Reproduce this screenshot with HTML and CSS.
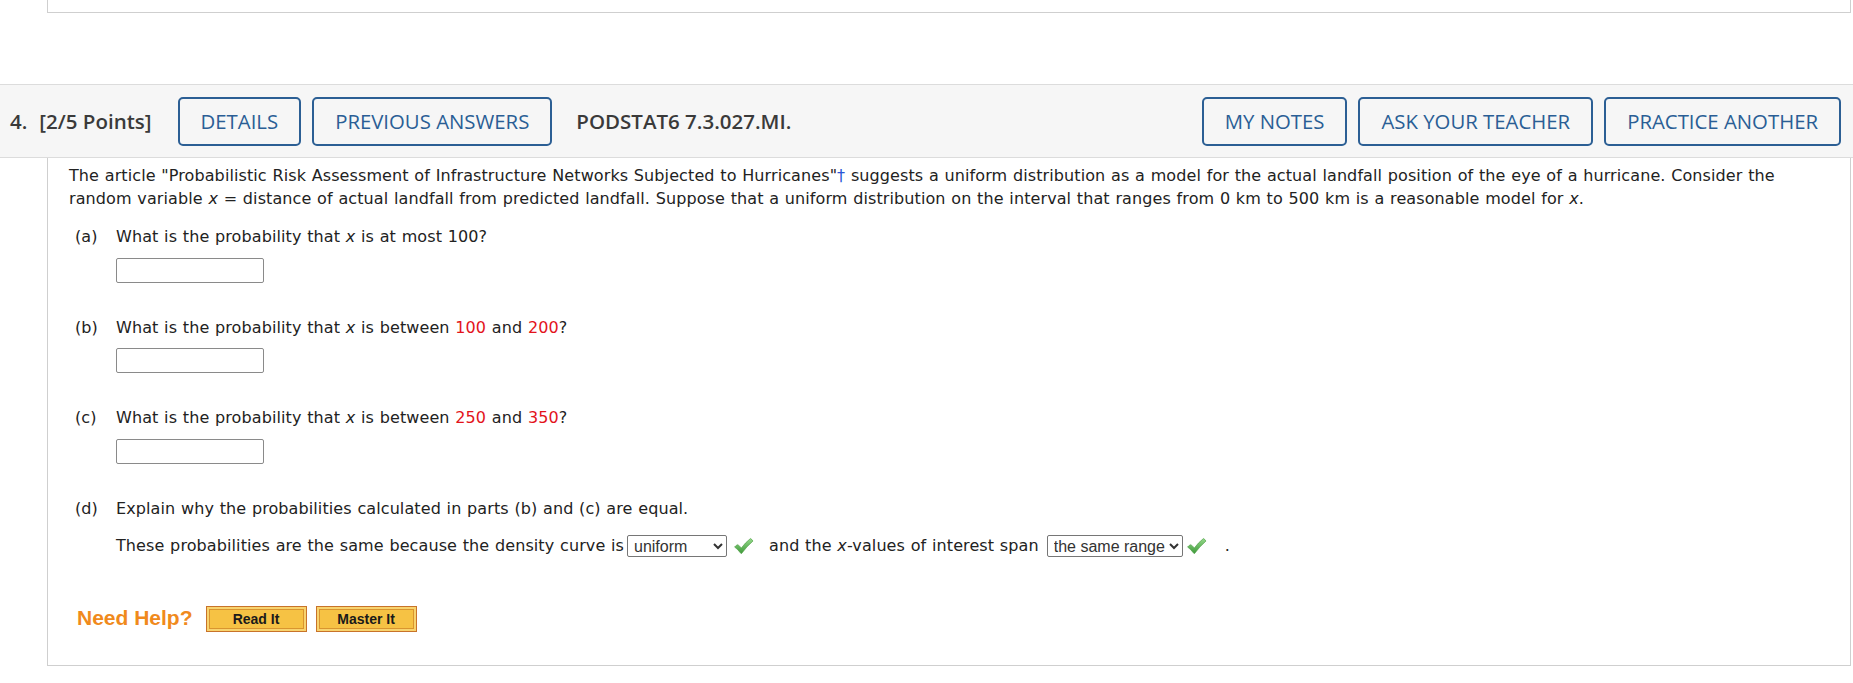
FILE: index.html
```html
<!DOCTYPE html>
<html>
<head>
<meta charset="utf-8">
<link rel="stylesheet" href="styles.css">
</head>
<body>
<div class="prev-card"></div>

<div class="qhead">
  <div class="qnum"><span class="num">4.</span><span class="pts">[2/5 Points]</span></div>
  <button class="hbtn first">DETAILS</button>
  <button class="hbtn">PREVIOUS ANSWERS</button>
  <div class="qcode">PODSTAT6 7.3.027.MI.</div>
  <div class="hright">
    <button class="hbtn">MY NOTES</button>
    <button class="hbtn">ASK YOUR TEACHER</button>
    <button class="hbtn">PRACTICE ANOTHER</button>
  </div>
</div>

<div class="qbody">
  <p class="intro">The article "Probabilistic Risk Assessment of Infrastructure Networks Subjected to Hurricanes"<span class="dagger">†</span> suggests a uniform distribution as a model for the actual landfall position of the eye of a hurricane. Consider the random variable <i>x</i> = distance of actual landfall from predicted landfall. Suppose that a uniform distribution on the interval that ranges from 0 km to 500 km is a reasonable model for <i>x</i>.</p>

  <div class="part">
    <div class="prow"><span class="plabel">(a)</span><span>What is the probability that <i>x</i> is at most 100?</span></div>
    <div class="ans"><input class="box" type="text"></div>
  </div>

  <div class="part">
    <div class="prow"><span class="plabel">(b)</span><span>What is the probability that <i>x</i> is between <span class="red">100</span> and <span class="red">200</span>?</span></div>
    <div class="ans"><input class="box" type="text"></div>
  </div>

  <div class="part">
    <div class="prow"><span class="plabel">(c)</span><span>What is the probability that <i>x</i> is between <span class="red">250</span> and <span class="red">350</span>?</span></div>
    <div class="ans"><input class="box" type="text"></div>
  </div>

  <div class="part">
    <div class="prow"><span class="plabel">(d)</span><span>Explain why the probabilities calculated in parts (b) and (c) are equal.</span></div>
    <div class="ans sentence">
      <span>These probabilities are the same because the density curve is</span>
      <select class="sel sel-a"><option>uniform</option></select>
      <svg class="check" width="21" height="18" viewBox="0 0 20 17"><defs><linearGradient id="g1" x1="0" y1="0" x2="0" y2="1"><stop offset="0" stop-color="#94d98a"/><stop offset="1" stop-color="#3f9a3a"/></linearGradient></defs><path d="M1.5 9.5 Q3 7.6 4.6 7.2 L8 10.3 Q12 5 16.6 1.4 Q18.2 2.2 19 3.8 Q13 9 8.2 15.6 Q7.4 15.8 7 15 Q4.5 11.5 1.5 9.5 Z" fill="url(#g1)" stroke="#4a9a40" stroke-width="0.6" stroke-linejoin="round"/></svg>
      <span class="after">and the <i>x</i>-values of interest span</span>
      <select class="sel sel-b"><option>the same range</option></select>
      <svg class="check check-b" width="21" height="18" viewBox="0 0 20 17"><defs><linearGradient id="g2" x1="0" y1="0" x2="0" y2="1"><stop offset="0" stop-color="#94d98a"/><stop offset="1" stop-color="#3f9a3a"/></linearGradient></defs><path d="M1.5 9.5 Q3 7.6 4.6 7.2 L8 10.3 Q12 5 16.6 1.4 Q18.2 2.2 19 3.8 Q13 9 8.2 15.6 Q7.4 15.8 7 15 Q4.5 11.5 1.5 9.5 Z" fill="url(#g2)" stroke="#4a9a40" stroke-width="0.6" stroke-linejoin="round"/></svg>
      <span class="dot">.</span>
    </div>
  </div>

  <div class="help">
    <span class="need">Need Help?</span>
    <button class="hb">Read It</button>
    <button class="hb">Master It</button>
  </div>
</div>
</body>
</html>
```
FILE: styles.css
```css
html, body {
  margin: 0;
  padding: 0;
  background: #ffffff;
}

body {
  font-family: "DejaVu Sans", Verdana, sans-serif;
  color: #222;
}

.prev-card {
  margin: 0 2px 0 47px;
  height: 12px;
  border: 1px solid #cfcfcf;
  border-top: none;
}

.qhead {
  margin-top: 71px;
  height: 72px;
  display: flex;
  align-items: center;
  background: #f6f6f6;
  border-top: 1px solid #dcdcdc;
  border-bottom: 1px solid #dcdcdc;
  padding: 0 12px 0 10px;
  font-family: "Open Sans", sans-serif;
  font-size: 20.5px;
}

.qnum {
  font-weight: 600;
  color: #3a3a3a;
  margin-right: 26px;
  white-space: nowrap;
}

.qnum .num {
  margin-right: 12px;
}

.hbtn {
  height: 49px;
  box-sizing: border-box;
  padding: 0 21px;
  border: 2px solid #2c5f94;
  border-radius: 5px;
  background: transparent;
  color: #2a5e95;
  font-family: "Open Sans", sans-serif;
  font-size: 20.35px;
  font-weight: 400;
  margin-left: 11px;
  white-space: nowrap;
}

.hbtn.first {
  margin-left: 0;
}

.hright .hbtn:first-child {
  margin-left: 0;
}

.qcode {
  margin-left: 24px;
  font-weight: 600;
  color: #3a3a3a;
  white-space: nowrap;
}

.hright {
  margin-left: auto;
  display: flex;
}

.qbody {
  margin: 0 2px 0 47px;
  border: 1px solid #cfcfcf;
  border-top: none;
  padding: 7px 12px 33px 21px;
  font-size: 16px;
  letter-spacing: 0.1px;
  word-spacing: 0.5px;
  line-height: 22.5px;
}

.intro {
  margin: 0 0 16px 0;
}

.dagger {
  color: #2b55d6;
}

.red {
  color: #e3131b;
}

.part {
  margin-bottom: 34px;
}

.prow {
  display: flex;
  padding-left: 6px;
}

.plabel {
  width: 41px;
  flex: none;
}

.ans {
  padding-left: 47px;
  margin-top: 9px;
}

.box {
  display: block;
  width: 148px;
  height: 25px;
  box-sizing: border-box;
  border: 1px solid #8a8a8a;
  border-radius: 2px;
  margin: 0;
  background: #fff;
}

.sentence {
  margin-top: 15px;
  display: flex;
  align-items: center;
  white-space: nowrap;
}

.sel {
  height: 22px;
  box-sizing: border-box;
  border: 1px solid #767676;
  border-radius: 2px;
  background: #fff;
  color: #333;
  font-family: "Liberation Sans", Arial, sans-serif;
  font-size: 16px;
  letter-spacing: 0;
  word-spacing: 0;
  padding: 0 0 0 2px;
  margin: 0;
}

.sel-a {
  width: 100px;
  margin-left: 3px;
}

.sel-b {
  width: 136px;
  margin-left: 8px;
}

.check {
  margin-left: 6px;
  flex: none;
}

.check-b {
  margin-left: 3px;
}

.after {
  margin-left: 15px;
}

.dot {
  margin-left: 18px;
}

.part:last-of-type {
  margin-bottom: 0;
}

.help {
  margin-top: 48px;
  display: flex;
  align-items: center;
  padding-left: 8px;
}

.need {
  font-family: "Liberation Sans", Arial, sans-serif;
  font-weight: bold;
  font-size: 21px;
  letter-spacing: 0;
  word-spacing: 0;
  color: #f08a1c;
  margin-right: 13px;
}

.hb {
  width: 101px;
  height: 26px;
  box-sizing: border-box;
  border: 1px solid #c8732a;
  background: #f6c244;
  box-shadow: inset 0 0 0 2px #f8d36e, inset 0 0 0 3px #d9952f;
  font-family: "Liberation Sans", Arial, sans-serif;
  font-weight: bold;
  font-size: 14px;
  color: #1a1a1a;
  margin-right: 9px;
  padding: 0;
}
```
